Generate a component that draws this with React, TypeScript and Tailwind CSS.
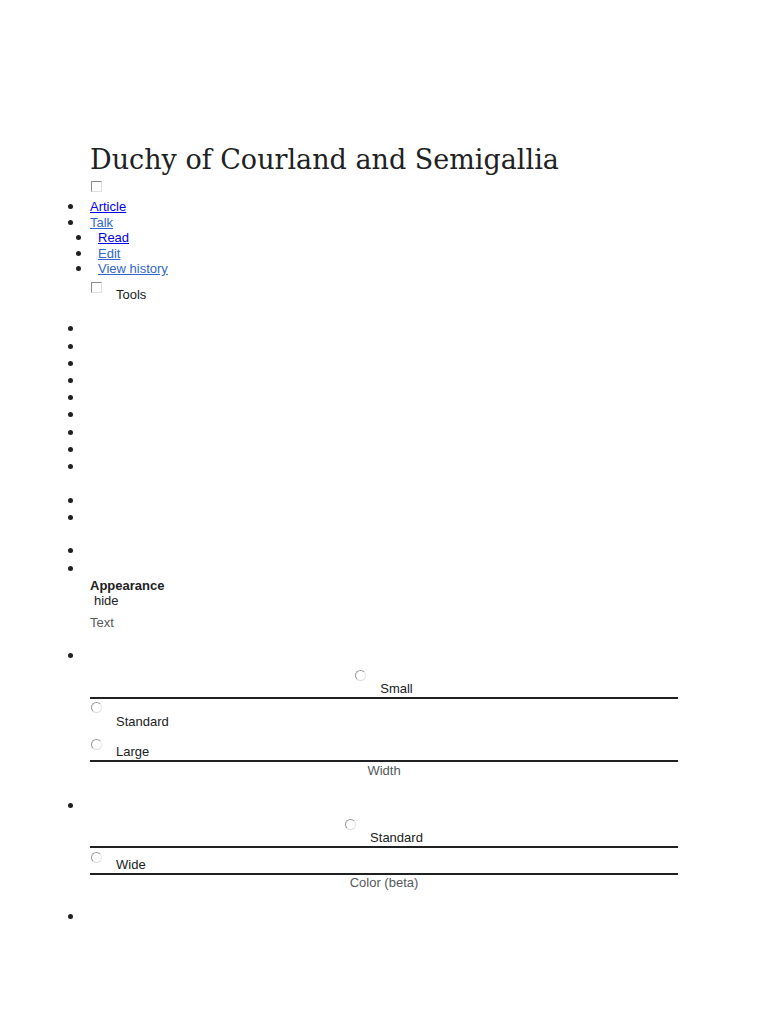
import React from 'react';

const Dot = () => <span className="block w-[5px] h-[5px] rounded-full bg-[#202122] mr-[17px] shrink-0" />;

const Checkbox = () => (
  <span className="block w-[11px] h-[11px] border border-t-[#8a8a8a] border-l-[#8a8a8a] border-r-[#e0e0e0] border-b-[#e0e0e0] bg-white shrink-0" />
);

const Radio = () => (
  <span className="block w-[11px] h-[11px] rounded-full border border-t-[#9a9a9a] border-l-[#9a9a9a] border-r-[#e6e6e6] border-b-[#dcdcdc] bg-white shrink-0" />
);

const Rule = () => <div className="h-[2px] bg-[#202122]" />;

const BulletRow: React.FC<{ children?: React.ReactNode }> = ({ children }) => (
  <div className="flex items-center h-[17.2px] -ml-[22px]">
    <Dot />
    {children}
  </div>
);

const LinkRow: React.FC<{ label: string; strong?: boolean }> = ({ label, strong }) => (
  <div className="flex items-center h-[15.5px] -ml-[22px]">
    <Dot />
    <a href="#" className={`underline leading-[15.5px] ${strong ? 'text-[#0000ee]' : 'text-[#3366cc]'}`}>{label}</a>
  </div>
);

const App: React.FC = () => {
  return (
    <div className="min-h-screen bg-white text-[#202122] text-[13px] px-[90px] font-['Liberation_Sans',Arial,sans-serif]">
      <div className="h-[141px]" />
      <h1 className="h-[38px] leading-[38px] text-[27px] font-normal whitespace-nowrap font-['DejaVu_Serif',serif]">
        Duchy of Courland and Semigallia
      </h1>
      <div className="h-[20px] pt-[2px] pl-px">
        <Checkbox />
      </div>

      <LinkRow label="Article" strong />
      <LinkRow label="Talk" />
      <div className="pl-[8px]">
        <LinkRow label="Read" strong />
        <LinkRow label="Edit" />
        <LinkRow label="View history" />
      </div>

      <div className="h-[43.9px] flex items-start pl-px">
        <span className="mt-[5.5px]"><Checkbox /></span>
        <span className="mt-[10.5px] ml-[14px] leading-[16px]">Tools</span>
      </div>

      {Array.from({ length: 9 }).map((_, i) => <BulletRow key={'a' + i} />)}
      <div className="h-[16.4px]" />
      <BulletRow />
      <BulletRow />
      <div className="h-[16.4px]" />
      <BulletRow />
      <BulletRow />

      <div className="h-[1.7px]" />
      <div className="h-[15px] leading-[15px] font-bold">Appearance</div>
      <div className="h-[15px] leading-[15px] pl-[4px]">hide</div>
      <div className="h-[7px]" />
      <div className="h-[15px] leading-[15px] text-[#54595d]">Text</div>

      <div className="h-[16.9px]" />
      <BulletRow />

      <div className="h-[32.4px] flex justify-center items-start">
        <span className="mt-[5.4px]"><Radio /></span>
        <span className="mt-[16.4px] ml-[14px] leading-[16px]">Small</span>
      </div>
      <Rule />
      <div className="h-[31px] flex items-start pl-px">
        <span className="mt-[3px]"><Radio /></span>
        <span className="mt-[15px] ml-[14px] leading-[16px]">Standard</span>
      </div>
      <div className="h-[30px] flex items-start pl-px">
        <span className="mt-[9.5px]"><Radio /></span>
        <span className="mt-[14px] ml-[14px] leading-[16px]">Large</span>
      </div>
      <Rule />
      <div className="h-[18px] leading-[18px] text-center text-[#54595d]">Width</div>

      <div className="h-[17.4px]" />
      <BulletRow />

      <div className="h-[31.4px] flex justify-center items-start">
        <span className="mt-[4.9px]"><Radio /></span>
        <span className="mt-[15.4px] ml-[14px] leading-[16px]">Standard</span>
      </div>
      <Rule />
      <div className="h-[25px] flex items-start pl-px">
        <span className="mt-[4.5px]"><Radio /></span>
        <span className="mt-[9px] ml-[14px] leading-[16px]">Wide</span>
      </div>
      <Rule />
      <div className="h-[16px] leading-[16px] text-center text-[#54595d]">Color (beta)</div>

      <div className="h-[17.4px]" />
      <BulletRow />
    </div>
  );
};

export default App;
